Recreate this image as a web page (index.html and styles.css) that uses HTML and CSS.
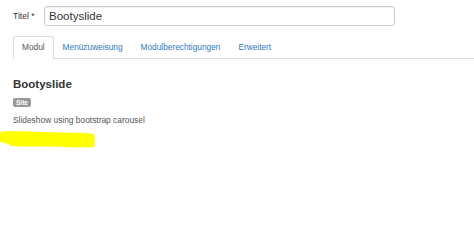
FILE: index.html
```html
<!DOCTYPE html>
<html lang="de">
<head>
    <meta charset="UTF-8">
    <title>Modul: Bootyslide</title>
    <link rel="stylesheet" href="styles.css">
</head>
<body>
    <div class="page">
        <div class="title-row">
            <label for="jform_title">Titel *</label>
            <input type="text" id="jform_title" value="Bootyslide">
        </div>

        <ul class="tabs">
            <li class="active"><a href="#details">Modul</a></li>
            <li><a href="#assignment">Menüzuweisung</a></li>
            <li><a href="#permissions">Modulberechtigungen</a></li>
            <li><a href="#options">Erweitert</a></li>
        </ul>

        <div class="tab-content">
            <h3>Bootyslide</h3>
            <span class="badge">Site</span>
            <p class="desc">Slideshow using bootstrap carousel</p>
            <svg class="marker" width="96" height="20" viewBox="0 0 96 20">
                <path d="M0 3 L8 2 L30 2.5 L60 3.5 L86 4 L94 5 L95 9 L94.5 18 L80 18.5 L50 17.5 L25 17.5 L10 17 L9 15 L0 13 Z" fill="#ffff00"/>
            </svg>
        </div>
    </div>
</body>
</html>
```

FILE: styles.css
```css
body {
    margin: 0;
    padding: 0;
    background-color: #fff;
    font-family: 'Liberation Sans', Arial, sans-serif;
    color: #333;
}

.page {
    padding: 6px 0 0 13px;
}

.title-row {
    display: flex;
    align-items: center;
}

.title-row label {
    font-size: 8.6px;
    color: #333;
    width: 31px;
}

.title-row input {
    box-sizing: border-box;
    width: 351px;
    height: 20px;
    border: 1px solid #ccc;
    border-radius: 3px;
    padding: 0 4px;
    font-family: 'Liberation Sans', Arial, sans-serif;
    font-size: 11.5px;
    color: #333;
    box-shadow: inset 0 1px 1px rgba(0, 0, 0, 0.06);
}

.tabs {
    list-style: none;
    margin: 10px 0 0 0;
    padding: 0;
    display: flex;
    border-bottom: 1px solid #ddd;
}

.tabs li {
    margin-bottom: -1px;
}

.tabs li a {
    display: block;
    height: 21px;
    line-height: 21px;
    padding: 0 8px;
    font-size: 8.3px;
    color: #2f79bd;
    text-decoration: none;
    border: 1px solid transparent;
    border-radius: 3px 3px 0 0;
}

.tabs li.active a {
    color: #555;
    background-color: #fff;
    border-color: #ddd #ddd transparent;
}

.tab-content {
    padding-top: 18px;
}

.tab-content h3 {
    margin: 0;
    font-size: 11.5px;
    font-weight: bold;
    line-height: 14px;
    color: #333;
}

.badge {
    display: inline-block;
    margin-top: 5px;
    padding: 0 3px;
    height: 9px;
    line-height: 9px;
    font-size: 6.5px;
    font-weight: bold;
    color: #fff;
    background-color: #999;
    border-radius: 2px;
}

.desc {
    margin: 6px 0 0 0;
    font-size: 8.4px;
    line-height: 11px;
    color: #555;
}

.marker {
    display: block;
    margin: 3px 0 0 -13px;
}
```
